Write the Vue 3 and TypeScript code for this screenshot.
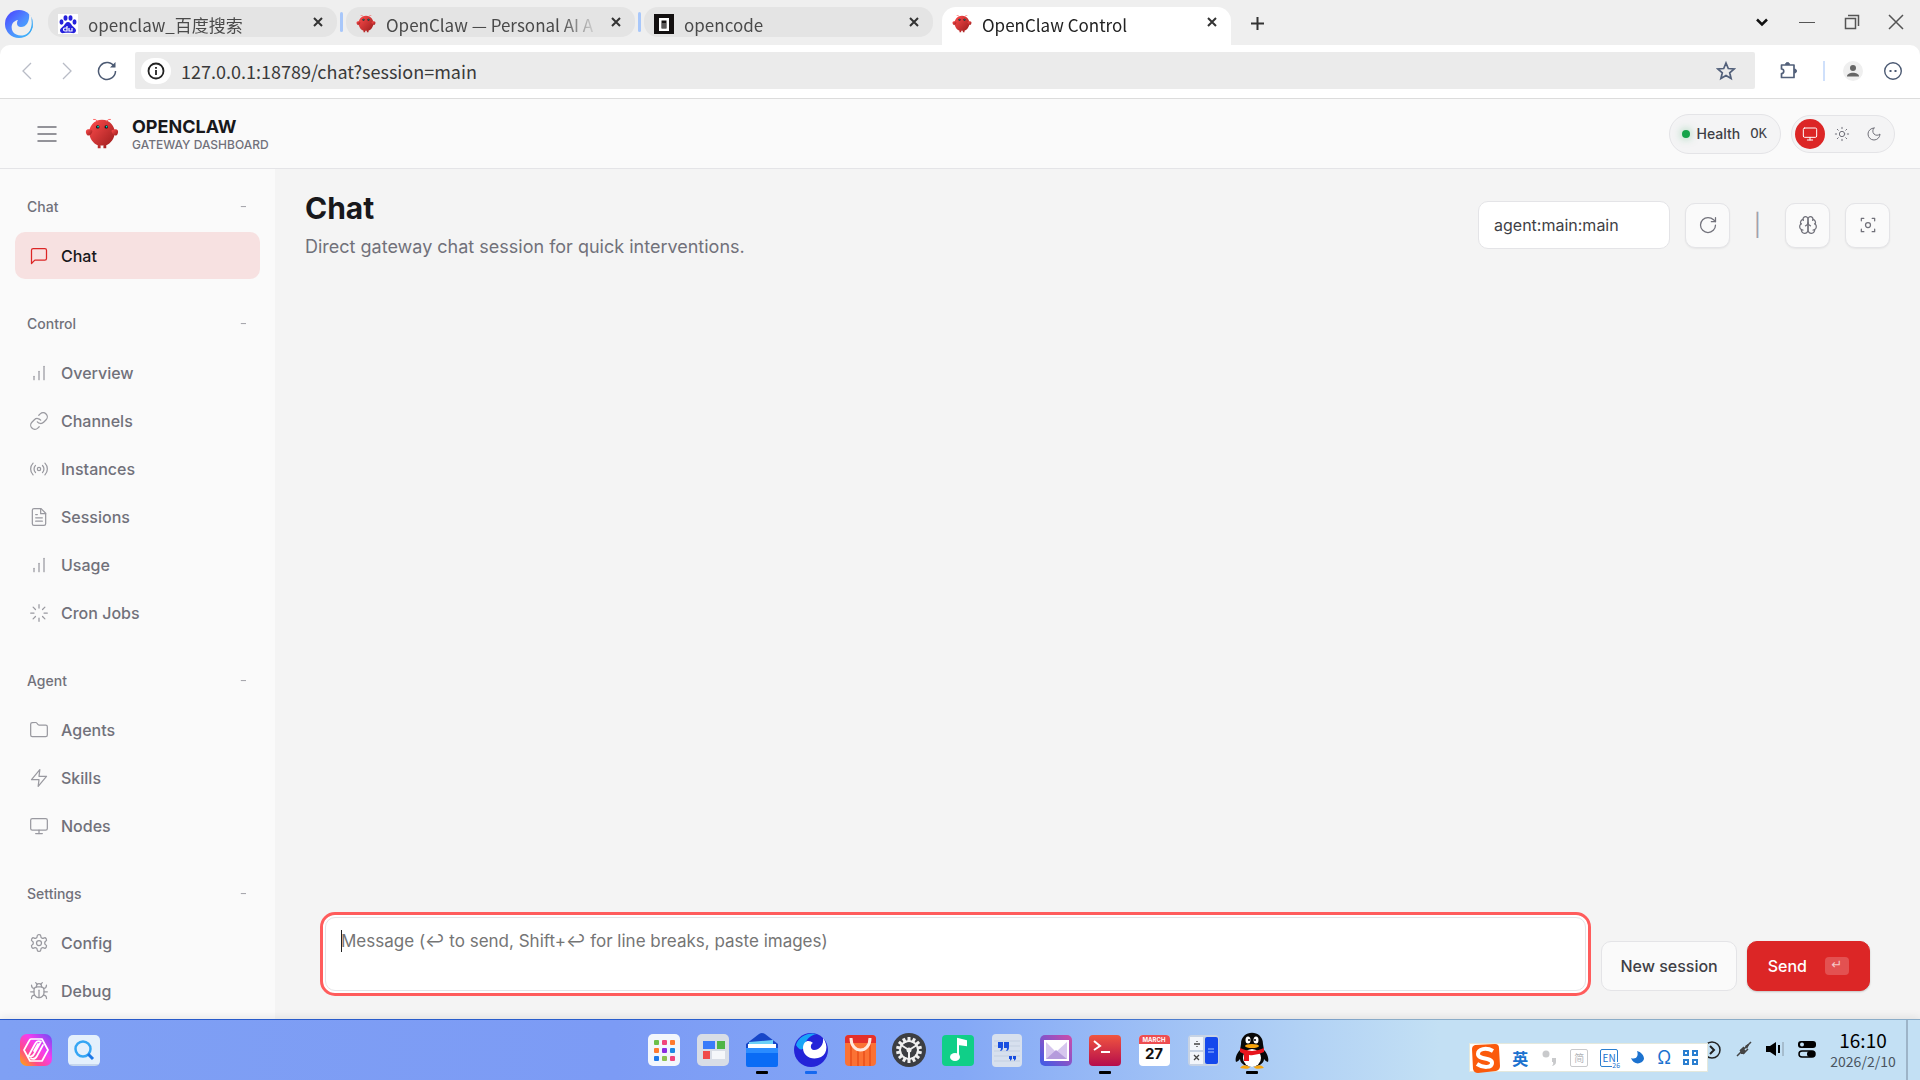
<script setup lang="ts">
import { ref } from 'vue'

interface NavItem {
  label: string
  icon: string
}
interface NavGroup {
  title: string
  items: NavItem[]
}
interface BrowserTab {
  title: string
  kind: string
}

const icons: Record<string, string[]> = {
  message: ['M21 15a2 2 0 0 1-2 2H7l-4 4V5a2 2 0 0 1 2-2h14a2 2 0 0 1 2 2z'],
  chart: ['M12 20V10', 'M18 20V4', 'M6 20v-4'],
  link: [
    'M10 13a5 5 0 0 0 7.54.54l3-3a5 5 0 0 0-7.07-7.07l-1.72 1.71',
    'M14 11a5 5 0 0 0-7.54-.54l-3 3a5 5 0 0 0 7.07 7.07l1.71-1.71',
  ],
  radio: [
    'M4.9 19.1C1 15.2 1 8.8 4.9 4.9',
    'M7.8 16.2c-2.3-2.3-2.3-6.1 0-8.5',
    'M10 12a2 2 0 1 0 4 0 2 2 0 1 0-4 0',
    'M16.2 7.8c2.3 2.3 2.3 6.1 0 8.5',
    'M19.1 4.9C23 8.8 23 15.1 19.1 19',
  ],
  file: [
    'M14.5 2H6a2 2 0 0 0-2 2v16a2 2 0 0 0 2 2h12a2 2 0 0 0 2-2V7.5z',
    'M14 2v6h6',
    'M16 13H8',
    'M16 17H8',
    'M10 9H8',
  ],
  loader: [
    'M12 2v4',
    'M12 18v4',
    'M4.93 4.93l2.83 2.83',
    'M16.24 16.24l2.83 2.83',
    'M2 12h4',
    'M18 12h4',
    'M4.93 19.07l2.83-2.83',
    'M16.24 7.76l2.83-2.83',
  ],
  folder: [
    'M4 20h16a2 2 0 0 0 2-2V8a2 2 0 0 0-2-2h-7.93a2 2 0 0 1-1.66-.9l-.82-1.2A2 2 0 0 0 7.93 3H4a2 2 0 0 0-2 2v13a2 2 0 0 0 2 2z',
  ],
  zap: ['M13 2L3 14h9l-1 8 10-12h-9l1-8z'],
  monitor: [
    'M4 3h16a2 2 0 0 1 2 2v10a2 2 0 0 1-2 2H4a2 2 0 0 1-2-2V5a2 2 0 0 1 2-2z',
    'M8 21h8',
    'M12 17v4',
  ],
  settings: [
    'M12.22 2h-.44a2 2 0 0 0-2 2v.18a2 2 0 0 1-1 1.73l-.43.25a2 2 0 0 1-2 0l-.15-.08a2 2 0 0 0-2.73.73l-.22.38a2 2 0 0 0 .73 2.73l.15.1a2 2 0 0 1 1 1.72v.51a2 2 0 0 1-1 1.74l-.15.09a2 2 0 0 0-.73 2.73l.22.38a2 2 0 0 0 2.73.73l.15-.08a2 2 0 0 1 2 0l.43.25a2 2 0 0 1 1 1.73V20a2 2 0 0 0 2 2h.44a2 2 0 0 0 2-2v-.18a2 2 0 0 1 1-1.73l.43-.25a2 2 0 0 1 2 0l.15.08a2 2 0 0 0 2.73-.73l.22-.39a2 2 0 0 0-.73-2.73l-.15-.08a2 2 0 0 1-1-1.74v-.5a2 2 0 0 1 1-1.74l.15-.09a2 2 0 0 0 .73-2.73l-.22-.38a2 2 0 0 0-2.73-.73l-.15.08a2 2 0 0 1-2 0l-.43-.25a2 2 0 0 1-1-1.73V4a2 2 0 0 0-2-2z',
    'M9 12a3 3 0 1 0 6 0 3 3 0 1 0-6 0',
  ],
  bug: [
    'M8 2l1.88 1.88',
    'M14.12 3.88L16 2',
    'M9 7.13v-1a3 3 0 1 1 6 0v1',
    'M12 20c-3.3 0-6-2.7-6-6v-3a4 4 0 0 1 4-4h4a4 4 0 0 1 4 4v3c0 3.3-2.7 6-6 6',
    'M12 20v-9',
    'M6.53 9C4.6 8.8 3 7.1 3 5',
    'M6 13H2',
    'M3 21c0-2.1 1.7-3.9 3.8-4',
    'M20.97 5c0 2.1-1.6 3.8-3.5 4',
    'M22 13h-4',
    'M17.2 17c2.1.1 3.8 1.9 3.8 4',
  ],
}

const groups: NavGroup[] = [
  { title: 'Chat', items: [{ label: 'Chat', icon: 'message' }] },
  {
    title: 'Control',
    items: [
      { label: 'Overview', icon: 'chart' },
      { label: 'Channels', icon: 'link' },
      { label: 'Instances', icon: 'radio' },
      { label: 'Sessions', icon: 'file' },
      { label: 'Usage', icon: 'chart' },
      { label: 'Cron Jobs', icon: 'loader' },
    ],
  },
  {
    title: 'Agent',
    items: [
      { label: 'Agents', icon: 'folder' },
      { label: 'Skills', icon: 'zap' },
      { label: 'Nodes', icon: 'monitor' },
    ],
  },
  {
    title: 'Settings',
    items: [
      { label: 'Config', icon: 'settings' },
      { label: 'Debug', icon: 'bug' },
    ],
  },
]

const tabs: BrowserTab[] = [
  { title: 'openclaw_百度搜索', kind: 'baidu' },
  { title: 'OpenClaw — Personal AI A', kind: 'claw' },
  { title: 'opencode', kind: 'code' },
  { title: 'OpenClaw Control', kind: 'claw' },
]

const activeTab = 3
const activeItem = ref('Chat')
const address = ref('127.0.0.1:18789/chat?session=main')
const session = ref('agent:main:main')
const draft = ref('')
const toothAngles = Array.from({ length: 14 }, (_, i) => (i * 360) / 14)
const gridColors = ['#6cc04a', '#f0447c', '#ff7a2e', '#ff7a2e', '#8a2be2', '#1e88e5', '#1e78e8', '#8cc152', '#f0447c']
</script>

<template>
  <div class="desktop">
    <svg class="defs" aria-hidden="true">
      <defs>
        <linearGradient id="claw-body" x1="0" y1="0" x2="1" y2="1">
          <stop offset="0" stop-color="#ff4d4d" />
          <stop offset="1" stop-color="#991b1b" />
        </linearGradient>
        <linearGradient id="swirl" x1="0" y1="0" x2="1" y2="1">
          <stop offset="0" stop-color="#4a3cff" />
          <stop offset="0.5" stop-color="#4f8cff" />
          <stop offset="1" stop-color="#3ac4f8" />
        </linearGradient>
        <symbol id="claw" viewBox="0 0 120 120">
          <path fill="url(#claw-body)" d="M60 10C30 10 15 35 15 55s15 40 30 45v10h10v-10s5 2 10 0v10h10v-10c15-5 30-25 30-45S90 10 60 10Z" />
          <path fill="url(#claw-body)" d="M20 45C5 40 0 50 5 60s15 5 20-5c3-7 0-10-5-10Z" />
          <path fill="url(#claw-body)" d="M100 45c15-5 20 5 15 15s-15 5-20-5c-3-7 0-10 5-10Z" />
          <path d="M45 15Q35 5 30 8M75 15Q85 5 90 8" fill="none" stroke="#ff4d4d" stroke-width="3" stroke-linecap="round" />
          <circle cx="45" cy="35" r="6" fill="#050810" /><circle cx="75" cy="35" r="6" fill="#050810" />
          <circle cx="46" cy="34" r="3" fill="#00e5cc" /><circle cx="76" cy="34" r="3" fill="#00e5cc" />
        </symbol>
      </defs>
    </svg>

    <!-- Browser chrome -->
    <div class="tabstrip">
      <svg class="browser-logo" viewBox="0 0 28 28">
        <circle cx="14" cy="14" r="14" fill="url(#swirl)" />
        <path d="M24 3c5 6 5 15-1 20-5 4-12 3-15-1-3-5-1-11 5-12-2 3-1 7 3 7 6 0 9-7 8-14Z" fill="#efefef" />
        <path d="M26 7c4 8 1 17-7 20 7-5 9-12 7-20Z" fill="#3ba9f5" />
      </svg>
      <div class="tabs" role="tablist">
        <template v-for="(tab, i) in tabs" :key="tab.title">
          <div class="tab" :class="{ active: i === activeTab }" role="tab" :aria-selected="i === activeTab">
            <svg v-if="tab.kind === 'claw'" class="favicon"><use href="#claw" /></svg>
            <svg v-else-if="tab.kind === 'baidu'" class="favicon" viewBox="0 0 20 20">
              <rect width="20" height="20" fill="#fff" />
              <g fill="#2520dc">
                <ellipse cx="3.5" cy="8" rx="2" ry="2.7" /><ellipse cx="7.5" cy="4" rx="2" ry="2.8" />
                <ellipse cx="12.5" cy="4" rx="2" ry="2.8" /><ellipse cx="16.5" cy="8" rx="2" ry="2.7" />
                <path d="M10 8c2 0 3 2 4 3.500s4 2.500 4 5c0 2-2 3-4 2.500s-6-.5-8 0-4-.5-4-2.500c0-2.500 3-3.500 4-5S8 8 10 8Z" />
              </g>
              <path d="M9 12v5H7a1.500 1.500 0 0 1 0-3h2M11 14v3h3v-3" fill="none" stroke="#fff" stroke-width="1.200" />
            </svg>
            <svg v-else class="favicon" viewBox="0 0 20 20">
              <rect width="20" height="20" fill="#131010" />
              <path d="M5 4h10v13H5z" fill="#fff" /><path d="M7.500 6.500h5v8h-5z" fill="#131010" /><path d="M8 9h4v5H8z" fill="#5a5858" />
            </svg>
            <span class="tab-title">{{ tab.title }}</span>
            <button class="close" aria-label="Close tab">
              <svg viewBox="0 0 10 10"><path d="M1 1l8 8M9 1L1 9" /></svg>
            </button>
          </div>
          <span v-if="i < 3" class="tab-sep" :class="{ clear: i === 2 }"></span>
        </template>
        <button class="plain new-tab" aria-label="New tab">
          <svg width="13" height="13" viewBox="0 0 13 13"><path d="M6.500 0v13M0 6.500h13" stroke="#333" stroke-width="2" /></svg>
        </button>
      </div>
      <div class="window-controls">
        <button class="plain" aria-label="Search tabs">
          <svg width="16" height="16" viewBox="0 0 16 16"><path d="M3 5.500l5 5 5-5" fill="none" stroke="#111" stroke-width="2.500" /></svg>
        </button>
        <button class="plain" aria-label="Minimize">
          <svg width="18" height="18" viewBox="0 0 18 18"><path d="M1 9.500h16" stroke="#555" /></svg>
        </button>
        <button class="plain" aria-label="Restore">
          <svg width="16" height="16" viewBox="0 0 16 16"><path d="M1.500 4.500h10v10h-10zM4 1.500h10.500V12" fill="none" stroke="#555" stroke-width="1.500" /></svg>
        </button>
        <button class="plain" aria-label="Close window">
          <svg width="16" height="16" viewBox="0 0 16 16"><path d="M1 1l14 14M15 1L1 15" stroke="#555" stroke-width="1.500" /></svg>
        </button>
      </div>
    </div>

    <div class="toolbar">
      <button class="plain" aria-label="Back">
        <svg width="20" height="20" viewBox="0 0 20 20"><path d="M14 2l-8 8 8 8" fill="none" stroke="#b8bcc6" stroke-width="1.300" /></svg>
      </button>
      <button class="plain" aria-label="Forward">
        <svg width="20" height="20" viewBox="0 0 20 20"><path d="M6 2l8 8-8 8" fill="none" stroke="#b8bcc6" stroke-width="1.300" /></svg>
      </button>
      <button class="plain" aria-label="Reload">
        <svg width="20" height="20" viewBox="0 0 20 20"><path d="M17.500 6A8.500 8.500 0 1 0 18.500 10" fill="none" stroke="#4c5a73" stroke-width="1.500" /><path d="M13 6.500h5.500V1z" fill="#4c5a73" /></svg>
      </button>
      <div class="address">
        <span class="site-info">
          <svg width="18" height="18" viewBox="0 0 18 18"><circle cx="9" cy="9" r="7.500" fill="none" stroke="#222" stroke-width="1.800" /><path d="M9 8v5M9 5v1.800" stroke="#222" stroke-width="1.800" /></svg>
        </span>
        <input v-model="address" class="url" type="text" aria-label="Address" spellcheck="false" />
        <button class="plain" aria-label="Bookmark">
          <svg width="20" height="20" viewBox="0 0 20 20"><path d="M10 2l2.300 5.500 5.900.5-4.500 3.800 1.400 5.700-5.100-3.100-5.100 3.100 1.400-5.700L1.800 8l5.900-.5z" fill="none" stroke="#52607a" stroke-width="1.700" /></svg>
        </button>
      </div>
      <div class="toolbar-end">
        <button class="plain" aria-label="Extensions">
          <svg width="20" height="20" viewBox="0 0 20 20"><path d="M2.500 4h12.500v12.500H2.500v-4c3 0 3-4.500 0-4.500z" fill="none" stroke="#52607a" stroke-width="1.700" stroke-linejoin="round" /><path d="M6.500 3.500a2 2 0 0 1 4 0zM15.500 8a2 2 0 0 1 0 4z" fill="#52607a" stroke="#52607a" /></svg>
        </button>
        <span class="toolbar-sep"></span>
        <button class="plain" aria-label="Profile">
          <svg width="20" height="20" viewBox="0 0 20 20"><circle cx="10" cy="10" r="10" fill="#efefef" /><circle cx="10" cy="7" r="3" fill="#666" /><path d="M4 15.500c0-5 12-5 12 0z" fill="#666" /></svg>
        </button>
        <button class="plain" aria-label="Menu">
          <svg width="20" height="20" viewBox="0 0 20 20"><circle cx="10" cy="10" r="8.300" fill="none" stroke="#4c5a73" stroke-width="1.400" /><path d="M6.500 9h2v2h-2zM11.500 9h2v2h-2z" fill="#4c5a73" /></svg>
        </button>
      </div>
    </div>

    <!-- Dashboard -->
    <header class="topbar">
      <button class="plain menu" aria-label="Toggle sidebar">
        <svg width="24" height="24" viewBox="0 0 24 24" fill="none" stroke="#71717a" stroke-width="1.500" stroke-linecap="round"><path d="M3 5h18M3 12h18M3 19h18" /></svg>
      </button>
      <svg class="brand-logo"><use href="#claw" /></svg>
      <div class="brand">
        <span class="brand-name">OPENCLAW</span>
        <span class="brand-sub">GATEWAY DASHBOARD</span>
      </div>
      <div class="health"><i></i><span>Health</span><span class="mono">OK</span></div>
      <div class="themes" role="group" aria-label="Theme">
        <button class="theme on" aria-label="System">
          <svg class="stroke" viewBox="0 0 24 24"><path v-for="d in icons.monitor" :key="d" :d="d" /></svg>
        </button>
        <button class="theme" aria-label="Light">
          <svg class="stroke" viewBox="0 0 24 24"><circle cx="12" cy="12" r="4" /><path d="M12 2v2M12 20v2M4.930 4.930l1.410 1.410M17.660 17.660l1.410 1.410M2 12h2M20 12h2M6.340 17.660l-1.410 1.410M19.070 4.930l-1.410 1.410" /></svg>
        </button>
        <button class="theme" aria-label="Dark">
          <svg class="stroke" viewBox="0 0 24 24"><path d="M12 3a6 6 0 0 0 9 9 9 9 0 1 1-9-9Z" /></svg>
        </button>
      </div>
    </header>

    <div class="shell">
      <nav class="sidebar">
        <section v-for="group in groups" :key="group.title" class="group">
          <button class="group-title"><span>{{ group.title }}</span><span class="dash">−</span></button>
          <div class="group-items">
            <a
              v-for="item in group.items"
              :key="item.label"
              href="#"
              class="nav-item"
              :class="{ current: item.label === activeItem }"
              @click.prevent="activeItem = item.label"
            >
              <svg class="stroke" viewBox="0 0 24 24"><path v-for="d in icons[item.icon]" :key="d" :d="d" /></svg>
              <span>{{ item.label }}</span>
            </a>
          </div>
        </section>
      </nav>

      <main class="content">
        <div class="page-head">
          <div>
            <h1>Chat</h1>
            <p>Direct gateway chat session for quick interventions.</p>
          </div>
          <div class="page-tools">
            <select v-model="session" aria-label="Session">
              <option>agent:main:main</option>
            </select>
            <button class="tool" aria-label="Refresh">
              <svg class="stroke" viewBox="0 0 24 24"><path d="M21 12a9 9 0 1 1-9-9c2.520 0 4.930 1 6.740 2.740L21 8" /><path d="M21 3v5h-5" /></svg>
            </button>
            <span class="divider">|</span>
            <button class="tool" aria-label="Show thinking">
              <svg class="stroke" viewBox="0 0 24 24">
                <path d="M12 5a3 3 0 1 0-5.997.125 4 4 0 0 0-2.526 5.770 4 4 0 0 0 .556 6.588A4 4 0 1 0 12 18Z" />
                <path d="M12 5a3 3 0 1 1 5.997.125 4 4 0 0 1 2.526 5.770 4 4 0 0 1-.556 6.588A4 4 0 1 1 12 18Z" />
                <path d="M15 13a4.500 4.500 0 0 1-3-4 4.500 4.500 0 0 1-3 4M17.600 6.500a3 3 0 0 0 .4-1.375M6 5.125A3 3 0 0 0 6.400 6.500M3.477 10.896a4 4 0 0 1 .585-.396M19.938 10.500a4 4 0 0 1 .585.396M6 18a4 4 0 0 1-1.967-.516M19.967 17.484A4 4 0 0 1 18 18" />
              </svg>
            </button>
            <button class="tool" aria-label="Focus mode">
              <svg class="stroke" viewBox="0 0 24 24"><path d="M4 7V4h3M20 7V4h-3M4 17v3h3M20 17v3h-3" /><circle cx="12" cy="12" r="3" /></svg>
            </button>
          </div>
        </div>

        <div class="composer">
          <textarea
            v-model="draft"
            aria-label="Message"
            placeholder="Message (↩ to send, Shift+↩ for line breaks, paste images)"
          ></textarea>
          <i class="caret"></i>
          <button class="secondary">New session</button>
          <button class="primary">Send <kbd>↵</kbd></button>
        </div>
      </main>
    </div>

    <!-- Desktop panel -->
    <footer class="taskbar">
      <div class="dock-start">
        <svg viewBox="0 0 34 34">
          <defs><linearGradient id="ai" x1="0" y1="1" x2="1" y2="0"><stop offset="0" stop-color="#ffb000" /><stop offset=".3" stop-color="#ff4a8a" /><stop offset=".6" stop-color="#f63cf0" /><stop offset="1" stop-color="#6a4cf5" /></linearGradient></defs>
          <rect x="1" y="1" width="32" height="32" rx="7" fill="url(#ai)" />
          <path d="M12 6h11l6 11-6 11H11L5 17l5-9q1-2 2-2M10 22l6-11q2-4 6-2.500L15 21q-2 4-6 2M24 12l-6 11q-2 4-6 2.500M15 18l4-7" fill="none" stroke="#fff" stroke-width="1.700" stroke-linejoin="round" stroke-linecap="round" />
        </svg>
        <svg viewBox="0 0 34 34">
          <rect x="1" y="2" width="32" height="31" rx="5" fill="#e4f0fc" /><path d="M3 32h28" stroke="#a8bede" />
          <circle cx="16" cy="16" r="7.500" fill="none" stroke="#35a6f4" stroke-width="2.500" /><path d="M21 21l5 5" stroke="#1c78e8" stroke-width="3" />
        </svg>
      </div>

      <div class="dock">
        <svg viewBox="0 0 34 40">
          <rect x="1" y="1" width="32" height="32" rx="5" fill="#f2f6fc" />
          <rect v-for="(c, i) in gridColors" :key="i" :x="7 + (i % 3) * 8" :y="7 + Math.floor(i / 3) * 8" width="5" height="5" rx="1" :fill="c" />
        </svg>
        <svg viewBox="0 0 34 40">
          <rect x="1" y="1" width="32" height="32" rx="5" fill="#d8dde6" />
          <path d="M7 8h12v8H7z" fill="#3a7bfa" /><path d="M21 8h8v8h-8z" fill="#4fb546" /><path d="M7 18h7v8H7z" fill="#f04a4a" /><path d="M16 18h13v8H16z" fill="#f5f7fa" />
        </svg>
        <svg viewBox="0 0 34 40">
          <path d="M1 11L14 1q3-2 6 0l13 10v8H1z" fill="#1746c8" /><path d="M4 9l24-2v4H4z" fill="#6bd0f8" /><path d="M3 11h28v4H3z" fill="#fff" />
          <rect x="1" y="15" width="32" height="19" rx="2" fill="#0a6cf5" /><path d="M1 15h32v5H1z" fill="#2a8cff" /><rect x="11" y="38" width="12" height="3" rx="1" fill="#000" />
        </svg>
        <svg viewBox="0 0 34 40">
          <circle cx="17" cy="17" r="17" fill="#2424d8" /><path d="M2 12C5 3 14-1 23 1c-7 1-12 6-12 13-3 4-6 3-9-2Z" fill="#18a4f8" />
          <path d="M29 5c6 8 4 18-5 20-8 2-15-3-15-10s6-9 10-5c-3 1-3 7 1 7 6 0 10-6 9-12Z" fill="#fff" /><rect x="11" y="38" width="12" height="3" rx="1" fill="#1468f0" />
        </svg>
        <svg viewBox="0 0 34 40">
          <rect x="2" y="2" width="31" height="31" rx="4" fill="#fb7234" /><path d="M2 10V6q0-4 4-4h23q4 0 4 4v4z" fill="#e5302a" /><path d="M8 11v22M15 17v16M21 17v16M27 11v22" stroke="#ee5720" stroke-width="2" />
          <path d="M8 5c0 16 19 16 19 0" fill="none" stroke="#ffe8de" stroke-width="3" />
        </svg>
        <svg viewBox="0 0 34 40">
          <circle cx="17" cy="17" r="17" fill="#3c3e42" />
          <path v-for="a in toothAngles" :key="a" d="M17 4v5" stroke="#f0f0f0" stroke-width="3" :transform="`rotate(${a} 17 17)`" />
          <circle cx="17" cy="17" r="9" fill="none" stroke="#f0f0f0" stroke-width="2" /><path d="M17 17v9M17 17l-8-5M17 17l8-5" stroke="#f0f0f0" stroke-width="2" /><circle cx="17" cy="17" r="2.500" fill="#f0f0f0" />
        </svg>
        <svg viewBox="0 0 34 40">
          <rect x="1" y="2" width="32" height="31" rx="4" fill="#10cf88" /><path d="M17 24V6l8 2v4l-8-1" fill="#fff" stroke="#fff" stroke-width="2" /><ellipse cx="14" cy="24" rx="5" ry="4" fill="#fff" />
        </svg>
        <svg viewBox="0 0 34 40">
          <rect x="2" y="1" width="30" height="33" rx="4" fill="#d7e0ee" /><path d="M4 8h26M4 13h26M4 18h26M4 23h26M4 28h26" stroke="#c4cfe0" />
          <path d="M8 9h5v5q0 4-3 4 1-1 1-3H8zM14 9h5v5q0 4-3 4 1-1 1-3h-3zM19 23h3v3l-2 2v-2h-1zM23 23h3v3l-2 2v-2h-1z" fill="#174ee0" />
        </svg>
        <svg viewBox="0 0 34 40">
          <defs><linearGradient id="mail" x1="0" y1="1" x2="1" y2="0"><stop offset="0" stop-color="#3b5ce8" /><stop offset="1" stop-color="#d04ba8" /></linearGradient></defs>
          <rect x="1" y="2" width="32" height="31" rx="5" fill="url(#mail)" /><path d="M6 8h23v19H6z" fill="#d6c6ee" /><path d="M6 8h23L17 19z" fill="#fff" /><path d="M6 27l11-10 12 10z" fill="#b59bdc" /><path d="M6 8h23v19H6z" fill="none" stroke="#fff" stroke-width="2" />
        </svg>
        <svg viewBox="0 0 34 40">
          <defs><linearGradient id="term" x1="0" y1="0" x2="0" y2="1"><stop offset="0" stop-color="#f0553f" /><stop offset="1" stop-color="#b50d4c" /></linearGradient></defs>
          <rect x="1" y="2" width="32" height="31" rx="4" fill="url(#term)" /><path d="M6 8l6 5-6 4M13 19h9" fill="none" stroke="#fff" stroke-width="2" /><rect x="11" y="38" width="12" height="3" rx="1" fill="#000" />
        </svg>
        <svg viewBox="0 0 34 40">
          <rect x="2" y="2" width="31" height="31" rx="4" fill="#fff" /><path d="M2 11V6q0-4 4-4h23q4 0 4 4v5z" fill="#ee4d50" />
          <text x="17" y="9" class="cal-month">MARCH</text><text x="17" y="26" class="cal-day">27</text>
        </svg>
        <svg viewBox="0 0 34 40">
          <rect x="2" y="2" width="31" height="31" rx="4" fill="#c7d3e4" /><path d="M4 4h13v13H4zM4 19h13v12H4z" fill="#f2f5fa" /><rect x="19" y="4" width="13" height="27" rx="2" fill="#1548ec" />
          <path d="M8 11h6M11 8v1M11 13v1M8 22l5 5M13 22l-5 5" stroke="#444" stroke-width="1.300" /><path d="M22 16h6M22 19h6" stroke="#a8c4ff" />
        </svg>
        <svg viewBox="0 0 34 40">
          <path d="M6 11C6-4 28-4 28 11l1 6c4 4 5 10 4 12q-2 0-4-3c0 10-24 10-24 0q-2 3-4 3c-1-3 0-8 4-12z" fill="#080808" />
          <ellipse cx="17" cy="25" rx="9" ry="9" fill="#fff" /><ellipse cx="13" cy="7" rx="2.500" ry="3.500" fill="#fff" /><ellipse cx="21" cy="7" rx="2.500" ry="3.500" fill="#fff" /><circle cx="14" cy="7" r="1" /><circle cx="20" cy="7" r="1" />
          <ellipse cx="17" cy="13" rx="7" ry="2" fill="#f8a50c" /><path d="M5 15q12 6 24 0v4q-8 4-15 3v6H9v-7l-4-2z" fill="#e8141c" />
          <path d="M5 35q3-5 10-1-1 3-10 1zM29 35q-3-5-10-1 1 3 10 1z" fill="#f8a50c" /><rect x="11" y="38" width="12" height="3" rx="1" fill="#000" />
        </svg>
      </div>

      <div class="tray">
        <div class="ime">
          <svg class="sogou" viewBox="0 0 30 30"><path d="M2 6q0-3 3-4L25 1q4 0 4 4l1 18q0 4-4 5L8 30q-4 0-5-4z" fill="#fb5a0c" /><path d="M23 8C16 4 8 6 8 11c0 6 14 3 14 9 0 5-9 5-15 1" fill="none" stroke="#fff" stroke-width="4" /></svg>
          <span class="ime-lang">英</span>
          <svg width="16" height="18" viewBox="0 0 16 18" fill="#c9cacc"><circle cx="4" cy="5" r="3.500" /><path d="M10 9h4v4q0 3-4 4 2-2 1-4h-1z" /></svg>
          <span class="ime-box gray">简</span>
          <span class="ime-box">EN<small>26</small></span>
          <svg width="15" height="15" viewBox="0 0 15 15"><path d="M7 1c2 5-1 9-6 7 2 7 11 7 13 1 0-4-3-7-7-8z" fill="#1c72cf" /></svg>
          <span class="omega">Ω</span>
          <svg width="16" height="16" viewBox="0 0 16 16" fill="none" stroke="#2b7fd0" stroke-width="2"><rect x="1" y="1" width="4" height="4" /><rect x="10" y="1" width="4" height="4" /><rect x="1" y="10" width="4" height="4" /><rect x="10" y="10" width="4" height="4" /></svg>
        </div>
        <svg width="18" height="18" viewBox="0 0 18 18" fill="none" stroke="#222" stroke-width="1.500"><circle cx="8" cy="9" r="8" /><path d="M6 5l4 4-4 4" stroke-width="2" /></svg>
        <svg width="16" height="16" viewBox="0 0 16 16"><path d="M1 15L15 1M4 10l4-4M7 13l5-5" stroke="#444" stroke-width="1.500" /><path d="M4 9l3-2 3 3-2 3H5zM9 5l3-2 1 1-2 4z" fill="#444" /></svg>
        <svg width="18" height="16" viewBox="0 0 18 16"><path d="M0 5h4l6-4v14l-6-4H0z" /><path d="M13 4v8" stroke="#000" stroke-width="2" /><path d="M17 1v14" stroke="#8a9aa8" stroke-width="1" /></svg>
        <svg width="18" height="17" viewBox="0 0 18 17"><rect width="18" height="7" rx="3" /><rect x="1" y="10" width="16" height="6" rx="3" fill="none" stroke="#000" stroke-width="1.500" /><circle cx="4" cy="3.500" r="2" fill="#c2e0f4" /><rect x="9" y="10" width="8" height="6" rx="3" /></svg>
        <div class="clock"><span>16:10</span><span class="date">2026/2/10</span></div>
        <span class="show-desktop"></span>
      </div>
    </footer>
  </div>
</template>

<style>
body {
  overflow: hidden;
}
</style>

<style scoped>
* {
  box-sizing: border-box;
}
.desktop {
  display: flex;
  flex-direction: column;
  height: 100vh;
  background: #efefef;
  font-family: Inter, 'Noto Sans CJK SC', sans-serif;
  color: #3f3f46;
}
.defs {
  position: absolute;
  width: 0;
  height: 0;
}
svg {
  flex: none;
  display: block;
}
button {
  font-family: inherit;
  padding: 0;
  cursor: pointer;
}
.plain {
  border: 0;
  background: none;
  display: flex;
}
.stroke {
  width: 20px;
  height: 20px;
  fill: none;
  stroke: currentColor;
  stroke-width: 1.5;
  stroke-linecap: round;
  stroke-linejoin: round;
}

/* tab strip */
.tabstrip {
  flex: none;
  height: 45px;
  display: flex;
  align-items: flex-start;
  padding-top: 7px;
  font-family: 'Noto Sans CJK SC', 'Noto Sans', sans-serif;
}
.browser-logo {
  width: 28px;
  height: 28px;
  margin: 3px 15px 0 5px;
}
.tabs {
  display: flex;
  flex: 1;
  min-width: 0;
}
.tab {
  width: 289px;
  height: 30px;
  display: flex;
  align-items: center;
  padding: 0 14px 0 10px;
  border-radius: 14px;
  background: #e4e4e4;
  color: #4a4a4a;
  font-size: 17px;
}
.tab.active {
  height: 38px;
  padding-bottom: 8px;
  background: #fff;
  color: #222;
  border-radius: 14px 14px 0 0;
}
.favicon {
  width: 20px;
  height: 20px;
  margin: 4px 10px 0 0;
}
.tab-title {
  flex: 1;
  overflow: hidden;
  white-space: nowrap;
  line-height: 28px;
  padding-top: 6px;
  margin-right: 12px;
  mask-image: linear-gradient(90deg, #000 82%, transparent);
}
.close {
  border: 0;
  background: none;
  width: 10px;
  height: 10px;
}
.close svg {
  width: 10px;
  height: 10px;
  stroke: #333;
  stroke-width: 2;
}
.tab-sep {
  width: 3px;
  height: 20px;
  margin: 5px 3px 0;
  border-radius: 2px;
  background: #a8c7fa;
}
.tab-sep.clear {
  background: none;
}
.new-tab {
  margin: 10px 0 0 20px;
}
.window-controls {
  display: flex;
  align-items: center;
  gap: 28px;
  height: 30px;
  padding-right: 16px;
}

/* toolbar */
.toolbar {
  flex: none;
  height: 54px;
  display: flex;
  align-items: center;
  gap: 20px;
  padding: 0 17px 2px;
  background: #fff;
  border-bottom: 1px solid #dcdcdc;
  border-radius: 10px 10px 0 0;
}
.address {
  flex: 1;
  height: 37px;
  margin-left: -2px;
  padding: 0 19px 0 6px;
  display: flex;
  align-items: center;
  background: #ebebeb;
  border-radius: 2px;
}
.site-info {
  width: 30px;
  height: 26px;
  border-radius: 13px;
  background: #fff;
  display: flex;
  align-items: center;
  justify-content: center;
}
.url {
  flex: 1;
  margin-left: 10px;
  padding: 0;
  border: 0;
  outline: 0;
  background: none;
  color: #3a3a3a;
  font: 18px 'Noto Sans CJK SC', 'Noto Sans', sans-serif;
}
.toolbar-end {
  display: flex;
  align-items: center;
  gap: 20px;
  margin-left: 4px;
}
.toolbar-sep {
  width: 2px;
  height: 20px;
  margin: 0 -2px 0 4px;
  background: #cfe0fb;
}

/* dashboard header */
.topbar {
  flex: none;
  height: 70px;
  display: flex;
  align-items: center;
  padding: 0 25px 0 35px;
  background: #fafafa;
  border-bottom: 1px solid #e4e4e7;
}
.brand-logo {
  width: 34px;
  height: 34px;
  margin: 0 13px 0 26px;
}
.brand {
  flex: 1;
  display: flex;
  flex-direction: column;
  padding-top: 2px;
}
.brand-name {
  color: #18181b;
  font-size: 18px;
  font-weight: 700;
  line-height: 20px;
}
.brand-sub {
  color: #71717a;
  font-size: 12px;
  font-weight: 500;
  line-height: 16px;
}
.health {
  height: 40px;
  display: flex;
  align-items: center;
  padding: 0 13px 0 12px;
  border: 1px solid #e4e4e7;
  border-radius: 20px;
  background: #f4f4f5;
  font-size: 14px;
  font-weight: 500;
}
.health i {
  width: 8px;
  height: 8px;
  margin-right: 7px;
  border-radius: 4px;
  background: #16a34a;
  box-shadow: 0 0 8px rgba(22, 163, 74, 0.5);
}
.mono {
  margin-left: 10px;
  font-family: 'Liberation Mono', monospace;
}
.themes {
  display: flex;
  gap: 2px;
  margin-left: 10px;
  padding: 3px 5px 3px 3px;
  border: 1px solid #e4e4e7;
  border-radius: 20px;
  background: #f4f4f5;
}
.theme {
  width: 30px;
  height: 30px;
  border: 0;
  border-radius: 15px;
  background: none;
  color: #71717a;
  display: flex;
  align-items: center;
  justify-content: center;
}
.theme.on {
  background: #dc2626;
  color: #fff;
}
.theme .stroke {
  width: 16px;
  height: 16px;
}

/* body */
.shell {
  flex: 1;
  min-height: 0;
  display: flex;
}
.sidebar {
  width: 275px;
  flex: none;
  padding: 20px 15px 0;
  background: #fafafa;
  overflow: hidden;
}
.group {
  margin-bottom: 27px;
}
.group-title {
  width: 100%;
  height: 34px;
  display: flex;
  align-items: center;
  justify-content: space-between;
  padding: 0 13px 0 12px;
  border: 0;
  background: none;
  color: #71717a;
  font-size: 14px;
  font-weight: 500;
}
.dash {
  font-size: 11px;
  opacity: 0.6;
}
.group-items {
  display: flex;
  flex-direction: column;
  gap: 1px;
  padding-top: 9px;
}
.nav-item {
  height: 47px;
  display: flex;
  align-items: center;
  gap: 12px;
  padding: 0 14px;
  border-radius: 10px;
  color: #71717a;
  font-size: 16px;
  font-weight: 500;
  text-decoration: none;
}
.nav-item .stroke {
  opacity: 0.7;
}
.nav-item.current {
  background: #f7e1e1;
  color: #18181b;
}
.nav-item.current .stroke {
  color: #dc2626;
  opacity: 1;
}
.content {
  flex: 1;
  min-width: 0;
  display: flex;
  flex-direction: column;
  justify-content: space-between;
  padding: 20px 30px 28px;
  background: #f4f4f4;
}
.page-head {
  display: flex;
  justify-content: space-between;
}
h1 {
  margin: 0;
  color: #18181b;
  font-size: 30px;
  font-weight: 700;
  line-height: 38px;
}
p {
  margin: 8px 0 0;
  color: #71717a;
  font-size: 18px;
  line-height: 24px;
}
.page-tools {
  display: flex;
  align-items: center;
  gap: 15px;
  height: 48px;
  margin-top: 12px;
}
select {
  appearance: none;
  width: 192px;
  height: 48px;
  padding: 0 15px;
  border: 1px solid #e4e4e7;
  border-radius: 10px;
  background: #fff;
  color: #3f3f46;
  font: 16px Inter, sans-serif;
}
.tool {
  width: 45px;
  height: 45px;
  display: flex;
  align-items: center;
  justify-content: center;
  border: 1px solid #e4e4e7;
  border-radius: 10px;
  background: #fafafa;
  color: #71717a;
  box-shadow: 0 1px 2px rgba(0, 0, 0, 0.06);
}
.divider {
  width: 25px;
  text-align: center;
  color: #a1a1aa;
  font-size: 22px;
}
.composer {
  position: relative;
  display: flex;
  align-items: flex-end;
  gap: 10px;
  padding: 0 20px;
}
textarea {
  flex: 1;
  height: 74px;
  margin-right: 5px;
  padding: 11px 15px;
  resize: none;
  border: 1px solid #e4e4e7;
  border-radius: 10px;
  background: #fff;
  outline: 3px solid #ff5c5c;
  outline-offset: 2px;
  box-shadow: 0 0 0 2px #fff;
  font: 17px/24px Inter, 'DejaVu Sans', sans-serif;
}
textarea::placeholder {
  color: #757575;
}
.caret {
  position: absolute;
  left: 36px;
  top: 13px;
  width: 1px;
  height: 22px;
  background: #222;
}
.secondary,
.primary {
  height: 50px;
  padding: 0 18px;
  border: 1px solid #e4e4e7;
  border-radius: 10px;
  background: #fafafa;
  color: #3f3f46;
  font-size: 16px;
  font-weight: 500;
}
.primary {
  display: flex;
  align-items: center;
  gap: 18px;
  padding: 0 20px;
  border-color: #dc2626;
  background: #dc2626;
  color: #fff;
  box-shadow: 0 1px 2px rgba(0, 0, 0, 0.2);
}
kbd {
  width: 24px;
  height: 18px;
  border-radius: 4px;
  background: rgba(255, 255, 255, 0.2);
  color: #f6c6c6;
  font: 13px/16px 'DejaVu Sans', sans-serif;
}

/* panel */
.taskbar {
  flex: none;
  position: relative;
  height: 61px;
  display: flex;
  justify-content: space-between;
  border-top: 1px solid #2b5fd0;
  background: linear-gradient(90deg, #7fa0f4 0, #7c9bf5 32%, #84a8f6 50%, #b2d2f5 68%, #c3e0f4 75%);
  border-image: linear-gradient(90deg, #2557c8 0, #2b62d0 55%, #8aacc8 72%) 1;
  box-shadow: 0 -2px 8px rgba(0, 0, 0, 0.08);
}
.dock-start {
  display: flex;
  gap: 14px;
  padding: 13px 0 0 19px;
}
.dock-start svg {
  width: 34px;
  height: 34px;
}
.dock {
  position: absolute;
  left: 50%;
  top: 12px;
  display: flex;
  gap: 15px;
  padding-right: 4px;
  transform: translateX(-50%);
}
.dock svg {
  width: 34px;
  height: 42px;
  overflow: visible;
}
.cal-month {
  fill: #fff;
  font: 700 6px Inter, sans-serif;
  text-anchor: middle;
}
.cal-day {
  fill: #111;
  font: 700 15px Inter, sans-serif;
  text-anchor: middle;
}
.tray {
  display: flex;
  align-items: flex-start;
}
.tray > svg {
  margin: 21px 14px 0 0;
}
.ime {
  position: relative;
  height: 29px;
  margin: 23px -4px 0 0;
  padding-right: 8px;
  display: flex;
  align-items: center;
  gap: 12px;
  background: #fff;
  border: 1px solid #e4e8dc;
  color: #1c72cf;
}
.sogou {
  width: 30px;
  height: 30px;
}
.ime-lang {
  width: 18px;
  font: 700 16px 'Noto Sans CJK SC', sans-serif;
}
.ime-box {
  position: relative;
  width: 18px;
  height: 18px;
  border: 1px solid #2b7fd0;
  border-radius: 2px;
  font: 10px/16px 'Noto Sans CJK SC', sans-serif;
  text-align: center;
}
.ime-box small {
  position: absolute;
  right: -3px;
  bottom: -3px;
  background: #fff;
  font-size: 7px;
  line-height: 7px;
}
.ime-box.gray {
  border-color: #c9cacc;
  color: #b4b6ba;
}
.omega {
  font-size: 18px;
}
.clock {
  width: 66px;
  margin: 7px 10px 0 0;
  display: flex;
  flex-direction: column;
  align-items: center;
  color: #000;
  font: 19px/26px 'Noto Sans CJK SC', sans-serif;
}
.date {
  color: #4a5560;
  font-size: 14px;
  line-height: 16px;
}
.show-desktop {
  width: 14px;
  height: 60px;
  border-left: 2px solid #9db4c8;
}
</style>
